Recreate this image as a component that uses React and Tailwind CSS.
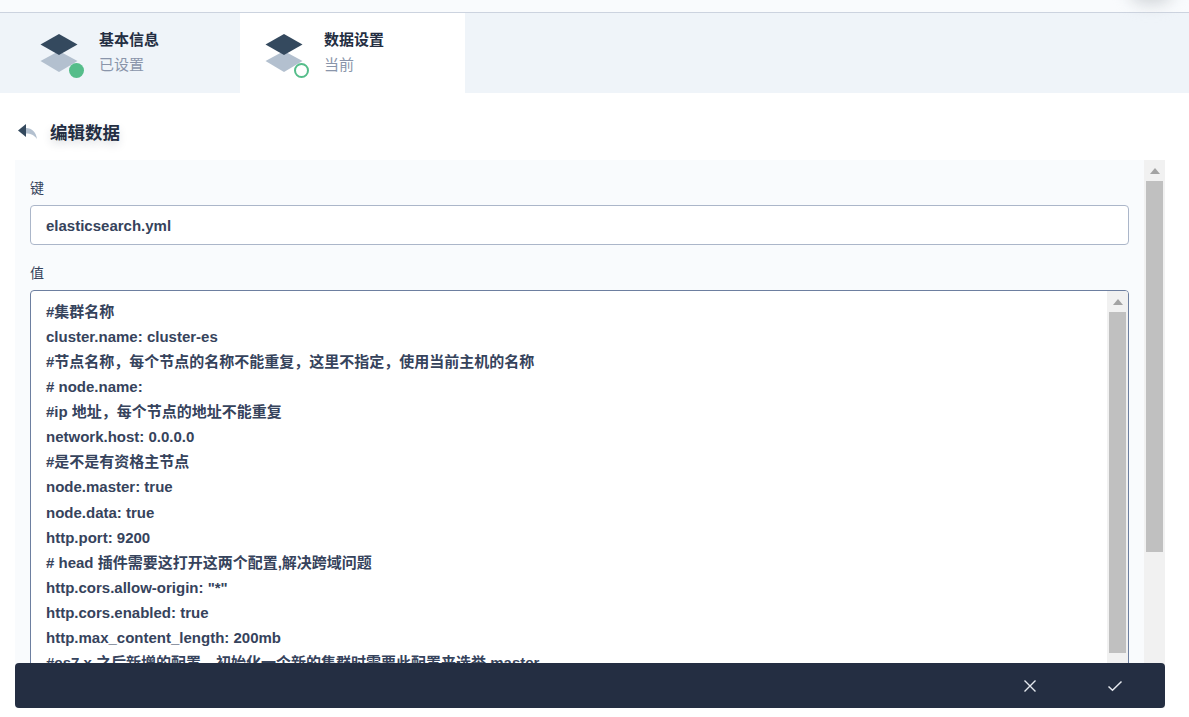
import React from "react";

const CJK = "font-['Liberation_Sans','Noto_Sans_CJK_SC',sans-serif]";

const lines = [
  "#集群名称",
  "cluster.name: cluster-es",
  "#节点名称，每个节点的名称不能重复，这里不指定，使用当前主机的名称",
  "# node.name:",
  "#ip 地址，每个节点的地址不能重复",
  "network.host: 0.0.0.0",
  "#是不是有资格主节点",
  "node.master: true",
  "node.data: true",
  "http.port: 9200",
  "# head 插件需要这打开这两个配置,解决跨域问题",
  'http.cors.allow-origin: "*"',
  "http.cors.enabled: true",
  "http.max_content_length: 200mb",
  "#es7.x 之后新增的配置，初始化一个新的集群时需要此配置来选举 master",
  "cluster.initial_master_nodes: node-1",
];

function Layers({ done }) {
  return (
    <div className="relative w-[44px] h-[44px] shrink-0">
      <svg width="44" height="44" viewBox="0 0 44 44" className="block">
        <path d="M19 17 L37.5 27 L19 38 L0.5 27 Z" fill="#b3c0cf" />
        <path d="M19 0 L37.5 10.5 L19 21 L0.5 10.5 Z" fill="#34495e" />
      </svg>
      {done ? (
        <span className="absolute left-[29px] top-[29px] w-[15px] h-[15px] rounded-full bg-[#55bd8a]" />
      ) : (
        <span className="absolute left-[29px] top-[29px] w-[15px] h-[15px] rounded-full bg-white border-2 border-[#55bd8a]" />
      )}
    </div>
  );
}

function Tab({ title, sub, done, active }) {
  return (
    <div className={`flex items-start h-[80px] pt-[21px] ${active ? "bg-white pl-[25px] w-[225px]" : "pl-[40px] w-[240px]"}`}>
      <Layers done={done} />
      <div className="ml-[15px] -mt-[4px]">
        <div className="text-[15px] leading-[20px] font-semibold text-[#242e42]">{title}</div>
        <div className="text-[15px] leading-[20px] mt-[5px] text-[#8a95aa]">{sub}</div>
      </div>
    </div>
  );
}

function Arrow() {
  return (
    <svg width="10" height="6" viewBox="0 0 10 6" className="block">
      <path d="M5 0 L10 6 L0 6 Z" fill="#a3a3a3" />
    </svg>
  );
}

function ScrollBar({ thumbHeight }) {
  return (
    <div className="w-[21px] shrink-0 bg-[#f1f1f1] flex flex-col items-center self-stretch">
      <div className="h-[21px] w-full flex items-center justify-center shrink-0">
        <Arrow />
      </div>
      <div className="w-[17px] bg-[#c0c0c0]" style={{ height: thumbHeight }} />
    </div>
  );
}

export default function App() {
  return (
    <div className={`relative w-[1189px] h-[717px] overflow-hidden bg-white ${CJK}`}>
      <div className="h-[13px] bg-[#f9fbfd] border-b border-[#ccd3df]" />
      <div className="absolute top-[-28px] right-[16px] w-[44px] h-[32px] rounded-full bg-[#d0d4d8] blur-[8px]" />

      <div className="flex h-[80px] bg-[#eff4f9]">
        <Tab title="基本信息" sub="已设置" done />
        <Tab title="数据设置" sub="当前" active />
      </div>

      <div className="flex items-center h-[67px] pt-[13px] pl-[18px]">
        <svg width="20" height="16" viewBox="0 0 20 16" className="block -mt-[2px]">
          <path d="M8 4 C14 4 18 8 19 15 C16 11 13 9.5 8 9.5 Z" fill="#b3c0cf" />
          <path d="M8 0 L0 6.5 L8 13 Z" fill="#34495e" />
        </svg>
        <span className="ml-[12px] text-[17.5px] font-semibold text-[#242e42] [text-shadow:0_4px_8px_rgba(36,46,66,0.15)]">
          编辑数据
        </span>
      </div>

      <div className="ml-[15px] w-[1150px] h-[548px] flex bg-[#f9fbfd] overflow-hidden">
        <div className="flex-1 pl-[15px] pr-[15px] min-w-0">
          <div className="pt-[19px] text-[14px] leading-[18px] text-[#36435c]">键</div>
          <div className="mt-[8px] h-[40px] rounded-[4px] border border-[#abb6c9] bg-white flex items-center pl-[15px] pt-[3px] text-[15px] font-semibold text-[#36435c]">
            elasticsearch.yml
          </div>
          <div className="mt-[19px] text-[14px] leading-[18px] text-[#36435c]">值</div>
          <div className="mt-[8px] h-[420px] flex rounded-[4px] border border-[#6d7fa0] bg-white overflow-hidden">
            <div className="flex-1 min-w-0 pl-[15px] pt-[7.5px] overflow-hidden">
              {lines.map((l) => (
                <div key={l} className="text-[15px] leading-[25.13px] h-[25.13px] font-semibold text-[#36435c] whitespace-pre">
                  {l}
                </div>
              ))}
            </div>
            <ScrollBar thumbHeight={341} />
          </div>
        </div>
        <ScrollBar thumbHeight={371} />
      </div>

      <div className="absolute left-[15px] top-[663px] w-[1150px] h-[45px] rounded-[4px] bg-[#242e42] flex items-center justify-end">
        <svg width="14" height="14" viewBox="0 0 14 14" className="block mr-[70px]">
          <path d="M1.5 1.5 L12.5 12.5 M12.5 1.5 L1.5 12.5" stroke="#e5e8ee" strokeWidth="1.4" fill="none" />
        </svg>
        <svg width="16" height="12" viewBox="0 0 16 12" className="block mr-[42px]">
          <path d="M1.5 6.5 L5.5 10.2 L14.5 1.5" stroke="#e5e8ee" strokeWidth="1.5" fill="none" />
        </svg>
      </div>
    </div>
  );
}
